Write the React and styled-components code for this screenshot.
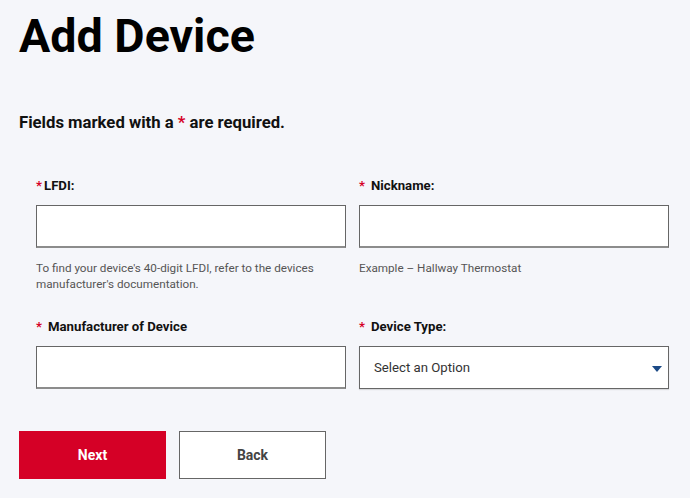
import styled, { createGlobalStyle } from "styled-components";

const GlobalStyle = createGlobalStyle`
    body{
        margin: 0;
        background: #F5F6FA;
        font-family: Roboto, "Liberation Sans", sans-serif;
        color: #111;
    }
`;

export default function App(){
    return(
        <Page>
            <GlobalStyle />
            <Title>Add Device</Title>
            <Notice>Fields marked with a <Star>*</Star> are required.</Notice>
            <Form onSubmit={e => e.preventDefault()}>
                <Field>
                    <Label><Star $gap="2px">*</Star>LFDI:</Label>
                    <Input />
                    <Hint>To find your device's 40-digit LFDI, refer to the devices manufacturer's documentation.</Hint>
                </Field>
                <Field>
                    <Label><Star $gap="6px">*</Star>Nickname:</Label>
                    <Input />
                    <Hint>Example – Hallway Thermostat</Hint>
                </Field>
                <Field>
                    <Label><Star $gap="6px">*</Star>Manufacturer of Device</Label>
                    <Input />
                </Field>
                <Field>
                    <Label><Star $gap="6px">*</Star>Device Type:</Label>
                    <SelectBox>
                        <span>Select an Option</span>
                        <svg width="10" height="6" viewBox="0 0 10 6">
                            <path d="M0 0 H10 L5 6 Z" fill="#1B4A86" />
                        </svg>
                    </SelectBox>
                </Field>
            </Form>
            <Buttons>
                <Button $primary>Next</Button>
                <Button>Back</Button>
            </Buttons>
        </Page>
    );
}

const Page = styled.div`
    padding: 8px 21px 0 19px;
`;

const Title = styled.h1`
    margin: 0;
    font-size: 46.6px;
    line-height: 56px;
    font-weight: 700;
    color: #000;
`;

const Notice = styled.p`
    margin: 49px 0 0;
    font-size: 16.7px;
    line-height: 20px;
    font-weight: 700;
`;

const Star = styled.span`
    color: #D50026;
    margin-right: ${props => props.$gap || 0};
`;

const Form = styled.div`
    display: grid;
    grid-template-columns: 310px 310px;
    column-gap: 13px;
    row-gap: 26px;
    margin: 44px 0 0 17px;
`;

const Field = styled.div`
    display: flex;
    flex-direction: column;
`;

const Label = styled.label`
    font-size: 13.2px;
    line-height: 18px;
    font-weight: 700;
    margin-bottom: 10px;
`;

const Input = styled.input`
    box-sizing: border-box;
    width: 100%;
    height: 43px;
    background: #FFF;
    border: 1px solid #666;
    border-bottom: 2px solid #8C8C8C;
    border-radius: 0;
    font: 13.2px Roboto, sans-serif;
    padding: 0 14px;

    :focus{
        outline: 0;
    }
`;

const Hint = styled.p`
    margin: 12px 0 0;
    font-size: 11.7px;
    line-height: 16px;
    color: #555;
`;

const SelectBox = styled.div`
    box-sizing: border-box;
    height: 43px;
    background: #FFF;
    border: 1px solid #666;
    box-shadow: 0 1px 1px rgba(0,0,0,0.12);
    display: flex;
    align-items: center;
    justify-content: space-between;
    padding: 0 6px 0 14px;
    font-size: 13.2px;
    color: #333;

    svg{
        margin-top: 2px;
    }
`;

const Buttons = styled.div`
    display: flex;
    gap: 13px;
    margin-top: 42px;
`;

const Button = styled.button`
    box-sizing: border-box;
    width: 147px;
    height: 48px;
    font: 700 14px Roboto, sans-serif;
    background: ${props => props.$primary ? "#D50026" : "#FFF"};
    color: ${props => props.$primary ? "#FFF" : "#444"};
    border: ${props => props.$primary ? "none" : "1px solid #666"};
    cursor: pointer;
`;
